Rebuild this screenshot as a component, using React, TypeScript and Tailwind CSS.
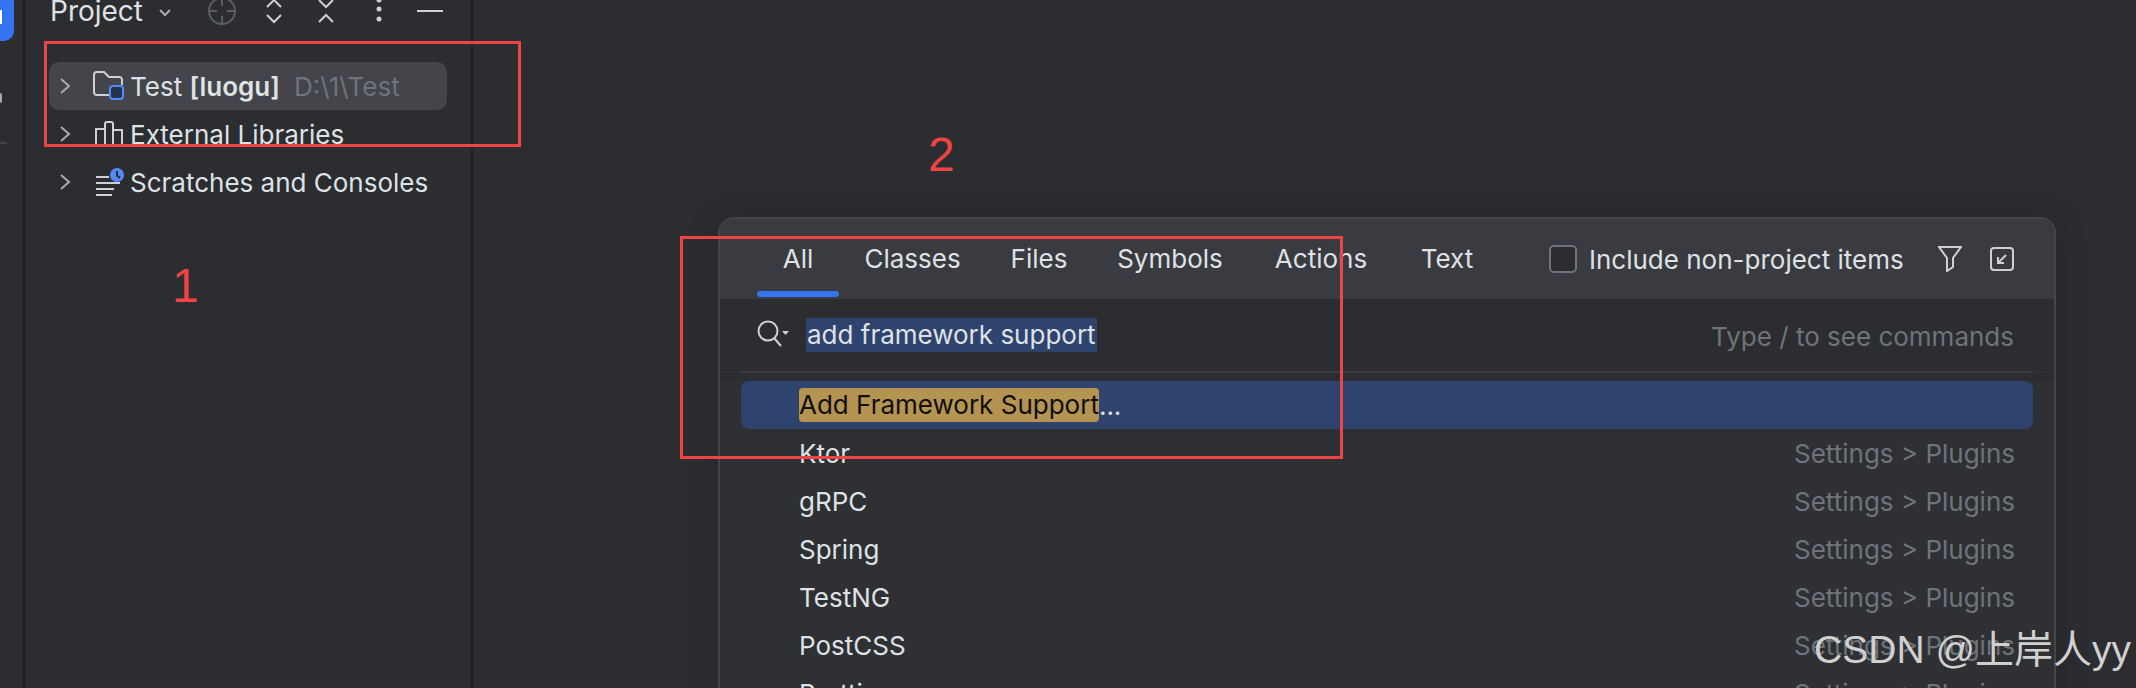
import React from "react";

const Chevron = () => (
  <svg width="12" height="18" viewBox="0 0 12 18" fill="none" stroke="#a8abb0" strokeWidth="2"><path d="M2 2l8 7-8 7" /></svg>
);

const TreeRow = ({ icon, children, active }: { icon: React.ReactNode; children: React.ReactNode; active?: boolean }) => (
  <div className={`flex h-[48px] items-center rounded-[10px] pl-[10px] ${active ? "bg-[#43454a]" : ""}`}>
    <Chevron />
    <div className="ml-[22px] flex w-[37px] shrink-0 items-center">{icon}</div>
    <div className="whitespace-nowrap">{children}</div>
  </div>
);

const tabs = [
  { t: "All", w: "w-[82px]", active: true },
  { t: "Classes", w: "w-[147px]" },
  { t: "Files", w: "w-[106px]" },
  { t: "Symbols", w: "w-[156px]" },
  { t: "Actions", w: "w-[146px]" },
  { t: "Text", w: "w-[106px]" },
];

const results = ["Ktor", "gRPC", "Spring", "TestNG", "PostCSS", "Prettier"];

export default function App() {
  return (
    <div className="relative flex h-[688px] w-[2136px] overflow-hidden bg-[#2b2d30] font-['Inter',sans-serif] text-[26px] text-[#dfe1e5]">
      <aside className="relative w-[25px] shrink-0 border-r-2 border-[#1e1f22]">
        <div className="flex h-[41px] w-[14px] rounded-br-[10px] bg-[#3574f0]">
          <div className="mt-[10px] h-[14px] w-[2px] bg-white" />
        </div>
        <div className="mt-[52px] h-[10px] w-[2px] rounded-r-full bg-[#a8abb0]" />
        <div className="mt-[39px] h-[2px] w-[7px] bg-[#43454a]" />
      </aside>

      <section className="w-[448px] shrink-0 border-r-2 border-[#1e1f22] pl-[24px] pr-[24px]">
        <header className="flex h-[22px] items-center pl-[1px]">
          <span className="w-[109px] text-[28px] leading-none">Project</span>
          <svg width="12" height="8" viewBox="0 0 12 8" fill="none" stroke="#a8abb0" strokeWidth="2" className="mt-[4px]"><path d="M1 1l5 5 5-5" /></svg>
          <svg width="30" height="30" viewBox="0 0 30 30" fill="none" stroke="#5a5d63" strokeWidth="2" className="ml-[36px]"><circle cx="15" cy="15" r="13" /><path d="M15 1v9M15 20v9M1 15h9M20 15h9" /></svg>
          <svg width="18" height="26" viewBox="0 0 18 26" fill="none" stroke="#ced0d6" strokeWidth="2" className="ml-[28px]"><path d="M2 9l7-7 7 7M2 17l7 7 7-7" /></svg>
          <svg width="18" height="26" viewBox="0 0 18 26" fill="none" stroke="#ced0d6" strokeWidth="2" className="ml-[34px]"><path d="M2 2l7 7 7-7M2 24l7-7 7 7" /></svg>
          <svg width="6" height="26" viewBox="0 0 6 26" fill="#ced0d6" className="ml-[41px]"><circle cx="3" cy="2" r="2.5" /><circle cx="3" cy="11" r="2.5" /><circle cx="3" cy="21" r="2.5" /></svg>
          <div className="ml-[35px] h-[2px] w-[26px] bg-[#ced0d6]" />
        </header>
        <div className="mt-[40px]">
          <TreeRow
            active
            icon={
              <svg width="32" height="30" viewBox="0 0 32 30" fill="none">
                <path d="M16 24H4a3 3 0 0 1-3-3V4a3 3 0 0 1 3-3h7l5 5h10a3 3 0 0 1 3 3v5" stroke="#ced0d6" strokeWidth="2" />
                <rect x="17" y="15" width="13" height="13" rx="3" fill="#25324d" stroke="#548af7" strokeWidth="2" />
              </svg>
            }
          >
            Test <span className="font-semibold">[luogu]</span>
            <span className="ml-[14px] text-[#6f737a]">D:\1\Test</span>
          </TreeRow>
          <TreeRow
            icon={
              <svg width="28" height="26" viewBox="0 0 28 26" fill="none" stroke="#ced0d6" strokeWidth="2" className="ml-[2px]">
                <rect x="1" y="8" width="9" height="17" /><rect x="10" y="1" width="8" height="24" rx="2" /><rect x="18" y="9" width="9" height="16" />
              </svg>
            }
          >
            External Libraries
          </TreeRow>
          <TreeRow
            icon={
              <svg width="30" height="28" viewBox="0 0 30 28" className="ml-[2px]">
                <path d="M1 9h13M1 15h24M1 21h18M1 27h16" stroke="#ced0d6" strokeWidth="2" fill="none" />
                <circle cx="22" cy="7" r="7" fill="#548af7" />
                <path d="M22 3v4.500l3 2.500" stroke="#2b2d30" strokeWidth="2" fill="none" />
              </svg>
            }
          >
            Scratches and Consoles
          </TreeRow>
        </div>
      </section>

      <main className="min-w-0 flex-1 pl-[245px] pr-[80px] pt-[217px]">
        <div className="overflow-hidden rounded-t-[16px] border-2 border-b-0 border-[#43454a] bg-[#2e3033] shadow-[0_0_30px_rgba(0,0,0,0.18)]">
          <div className="flex h-[80px] items-stretch bg-[#393b40] pl-[37px]">
            {tabs.map((tab) => (
              <div key={tab.t} className={`relative flex shrink-0 items-center justify-center pb-[1px] ${tab.w}`}>
                {tab.t}
                {tab.active && <div className="absolute bottom-[2px] left-0 right-0 h-[6px] rounded-full bg-[#3574f0]" />}
              </div>
            ))}
            <div className="ml-[49px] flex items-center">
              <div className="h-[28px] w-[28px] rounded-[5px] border-2 border-[#6f737a] bg-[#2b2d30]" />
              <span className="ml-[12px] whitespace-nowrap">Include non-project items</span>
              <svg width="24" height="26" viewBox="0 0 24 26" fill="none" stroke="#ced0d6" strokeWidth="2" className="ml-[34px]"><path d="M1 1h22l-8 11v9l-6 4V12z" /></svg>
              <svg width="24" height="24" viewBox="0 0 24 24" fill="none" stroke="#ced0d6" strokeWidth="2" className="ml-[28px]"><rect x="1" y="1" width="22" height="22" rx="3" /><path d="M16 8l-8 8M8 10v6h6" /></svg>
            </div>
          </div>
          <div className="flex h-[72px] items-center bg-[#2b2d30] pl-[37px] pr-[40px]">
            <svg width="32" height="30" viewBox="0 0 32 30" fill="none" stroke="#ced0d6" strokeWidth="2"><circle cx="11" cy="11" r="9.500" /><path d="M17 18l7 8" /><path d="M25 11h7l-3.500 4z" fill="#ced0d6" stroke="none" /></svg>
            <span className="ml-[17px] bg-[#2e436e] px-[1px] leading-[34px]">add framework support</span>
            <span className="ml-auto mt-[2px] text-[#6f737a]">Type / to see commands</span>
          </div>
          <div className="mx-[21px] h-[2px] bg-[#393b40]" />
          <div className="bg-[#2b2d30] pt-[8px]" />
          <div className="mx-[21px] flex h-[48px] items-center rounded-[8px] bg-[#2e436e] pl-[58px]">
            <span className="rounded-[4px] bg-[#b59350] text-[#0f0f0f] leading-[34px]">Add Framework Support</span>...
          </div>
          {results.map((r) => (
            <div key={r} className="flex h-[48px] items-center justify-between pl-[79px] pr-[39px]">
              <span>{r}</span>
              <span className="text-[#6f737a]">Settings &gt; Plugins</span>
            </div>
          ))}
        </div>
      </main>

      <div className="absolute left-[44px] top-[41px] h-[106px] w-[477px] border-[3px] border-[#ee4444]" />
      <div className="absolute left-[680px] top-[236px] h-[223px] w-[663px] border-[3px] border-[#ee4444]" />
      <div className="absolute left-[172px] top-[262px] font-['Liberation_Sans',sans-serif] text-[48px] leading-none text-[#ee4444]">1</div>
      <div className="absolute left-[928px] top-[131px] font-['Liberation_Sans',sans-serif] text-[48px] leading-none text-[#ee4444]">2</div>
      <div className="absolute right-[5px] top-[625px] whitespace-nowrap font-['Liberation_Sans','Noto_Sans_CJK_SC',sans-serif] text-[39px] leading-[50px] text-[#d0d0d0]">CSDN @上岸人yy</div>
    </div>
  );
}
